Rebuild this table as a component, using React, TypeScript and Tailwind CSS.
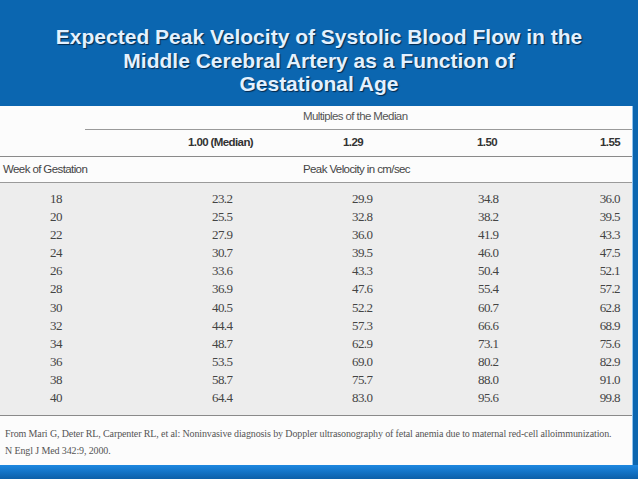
const rows: [string, string, string, string, string][] = [
  ["18", "23.2", "29.9", "34.8", "36.0"],
  ["20", "25.5", "32.8", "38.2", "39.5"],
  ["22", "27.9", "36.0", "41.9", "43.3"],
  ["24", "30.7", "39.5", "46.0", "47.5"],
  ["26", "33.6", "43.3", "50.4", "52.1"],
  ["28", "36.9", "47.6", "55.4", "57.2"],
  ["30", "40.5", "52.2", "60.7", "62.8"],
  ["32", "44.4", "57.3", "66.6", "68.9"],
  ["34", "48.7", "62.9", "73.1", "75.6"],
  ["36", "53.5", "69.0", "80.2", "82.9"],
  ["38", "58.7", "75.7", "88.0", "91.0"],
  ["40", "64.4", "83.0", "95.6", "99.8"],
];

const sans = "font-['Liberation_Sans',Arial,sans-serif] text-[11.5px] tracking-[-0.6px]";
const serif = "font-['Liberation_Serif','Times_New_Roman',serif]";

export default function App() {
  return (
    <div className="w-[638px] h-[479px] bg-[#0b66b0] flex flex-col overflow-hidden">
      {/* Title */}
      <div className="h-[106px] flex items-center justify-center pt-[15px]">
        <h1 className="text-center text-[21px] leading-[23.5px] font-bold text-[#e3f1ff] font-['Liberation_Sans',Arial,sans-serif] [text-shadow:1px_1px_1px_#06284a]">
          Expected Peak Velocity of Systolic Blood Flow in the
          <br />
          Middle Cerebral Artery as a Function of
          <br />
          Gestational Age
        </h1>
      </div>

      <div className="flex">
        {/* Scanned table */}
        <div className="w-[632px] h-[359px] bg-[#fcfcfc] flex flex-col text-[#3b3b3b]">
          <div className={sans}>
            <div className="h-[24px] ml-[85px] border-b border-[#9a9a9a] flex items-center pb-[2px]">
              <span className="ml-[218px] text-[#555]">Multiples of the Median</span>
            </div>
            <div className="h-[27px] border-b border-[#8a8a8a] grid grid-cols-[188px_155px_134px_155px] items-center font-bold text-[#333]">
              <span />
              <span>1.00 (Median)</span>
              <span>1.29</span>
              <span className="flex justify-between pr-[12px]">
                <span>1.50</span>
                <span>1.55</span>
              </span>
            </div>
            <div className="h-[26px] border-b border-[#9a9a9a] flex items-center text-[#444]">
              <span className="ml-[3px] w-[300px]">Week of Gestation</span>
              <span>Peak Velocity in cm/sec</span>
            </div>
          </div>

          <div className={`bg-[#ededed] pt-[7px] pb-[8px] border-b border-[#8a8a8a] ${serif} text-[13px] tracking-[-0.6px] text-[#444]`}>
            {rows.map((r) => (
              <div key={r[0]} className="h-[18.1px] leading-[18.1px] grid grid-cols-[212px_140px_126px_120px_34px]">
                <span className="pl-[50px]">{r[0]}</span>
                <span>{r[1]}</span>
                <span>{r[2]}</span>
                <span>{r[3]}</span>
                <span className="text-right pr-[12px] -ml-[12px]">{r[4]}</span>
              </div>
            ))}
          </div>

          <div className={`pt-[9px] pl-[5px] ${serif} text-[10px] leading-[17px] text-[#555] tracking-[-0.12px]`}>
            <div>
              From Mari G, Deter RL, Carpenter RL, et al: Noninvasive diagnosis by Doppler ultrasonography of fetal anemia due to maternal red-cell alloimmunization.
            </div>
            <div>N Engl J Med 342:9, 2000.</div>
          </div>
        </div>
        <div className="w-[6px] bg-[#0b66b0] border-l border-[#8fc3ee]" />
      </div>

      {/* Bottom strip */}
      <div className="flex-1 bg-gradient-to-b from-[#1e88e0] via-[#1373c6] to-[#0c5fa8]" />
    </div>
  );
}
